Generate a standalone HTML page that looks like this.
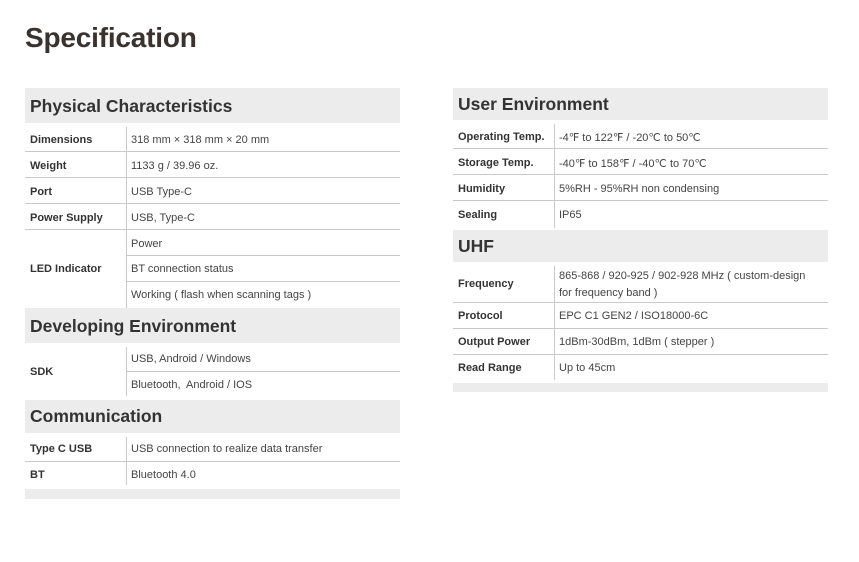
<!DOCTYPE html>
<html><head><style>
body{margin:0;width:859px;height:562px;background:#fff;position:relative;font-family:"Liberation Sans",sans-serif;color:#333;overflow:hidden}
div{position:absolute}
.title{left:25px;top:22px;font-size:28px;font-weight:bold;color:#3b322e;letter-spacing:-0.2px}
.hd{background:#ececec;font-size:17.5px;font-weight:bold;color:#333;padding-left:5px;box-sizing:border-box}
.ln{height:1px;background:#c9c9c9}
.vl{width:1px;background:#c9c9c9}
.l{font-size:11px;font-weight:bold;color:#333;margin-top:2px}
.v{font-size:11px;color:#444;margin-top:2px}
</style></head><body>
<div class="title">Specification</div>

<!-- LEFT -->
<div class="hd" style="left:25px;top:88px;width:375px;height:35px;line-height:37px">Physical Characteristics</div>
<div class="vl" style="left:126px;top:127px;height:181px"></div>
<div class="ln" style="left:25px;top:151px;width:375px"></div>
<div class="ln" style="left:25px;top:177px;width:375px"></div>
<div class="ln" style="left:25px;top:203px;width:375px"></div>
<div class="ln" style="left:25px;top:229px;width:375px"></div>
<div class="ln" style="left:126px;top:255px;width:274px"></div>
<div class="ln" style="left:126px;top:281px;width:274px"></div>
<div class="l" style="left:30px;top:132px">Dimensions</div><div class="v" style="left:131px;top:132px">318 mm × 318 mm × 20 mm</div>
<div class="l" style="left:30px;top:158px">Weight</div><div class="v" style="left:131px;top:158px">1133 g / 39.96 oz.</div>
<div class="l" style="left:30px;top:184px">Port</div><div class="v" style="left:131px;top:184px">USB Type-C</div>
<div class="l" style="left:30px;top:210px">Power Supply</div><div class="v" style="left:131px;top:210px">USB, Type-C</div>
<div class="v" style="left:131px;top:236px">Power</div>
<div class="l" style="left:30px;top:261px">LED Indicator</div><div class="v" style="left:131px;top:261px">BT connection status</div>
<div class="v" style="left:131px;top:287px">Working ( flash when scanning tags )</div>

<div class="hd" style="left:25px;top:308px;width:375px;height:35px;line-height:37px">Developing Environment</div>
<div class="vl" style="left:126px;top:347px;height:49px"></div>
<div class="ln" style="left:126px;top:371px;width:274px"></div>
<div class="v" style="left:131px;top:351px">USB, Android / Windows</div>
<div class="l" style="left:30px;top:364px">SDK</div>
<div class="v" style="left:131px;top:377px">Bluetooth,&nbsp; Android / IOS</div>

<div class="hd" style="left:25px;top:400px;width:375px;height:33px;line-height:33px">Communication</div>
<div class="vl" style="left:126px;top:437px;height:48px"></div>
<div class="ln" style="left:25px;top:461px;width:375px"></div>
<div class="l" style="left:30px;top:441px">Type C USB</div><div class="v" style="left:131px;top:441px">USB connection to realize data transfer</div>
<div class="l" style="left:30px;top:467px">BT</div><div class="v" style="left:131px;top:467px">Bluetooth 4.0</div>
<div class="hd" style="left:25px;top:489px;width:375px;height:10px"></div>

<!-- RIGHT -->
<div class="hd" style="left:453px;top:88px;width:375px;height:32px;line-height:32px">User Environment</div>
<div class="vl" style="left:554px;top:124px;height:104px"></div>
<div class="ln" style="left:453px;top:148px;width:375px"></div>
<div class="ln" style="left:453px;top:174px;width:375px"></div>
<div class="ln" style="left:453px;top:200px;width:375px"></div>
<div class="l" style="left:458px;top:129px">Operating Temp.</div><div class="v" style="left:559px;top:129px">-4℉ to 122℉ / -20℃ to 50℃</div>
<div class="l" style="left:458px;top:155px">Storage Temp.</div><div class="v" style="left:559px;top:155px">-40℉ to 158℉ / -40℃ to 70℃</div>
<div class="l" style="left:458px;top:181px">Humidity</div><div class="v" style="left:559px;top:181px">5%RH - 95%RH non condensing</div>
<div class="l" style="left:458px;top:207px">Sealing</div><div class="v" style="left:559px;top:207px">IP65</div>

<div class="hd" style="left:453px;top:230px;width:375px;height:32px;line-height:32px">UHF</div>
<div class="vl" style="left:554px;top:266px;height:114px"></div>
<div class="ln" style="left:453px;top:302px;width:375px"></div>
<div class="ln" style="left:453px;top:328px;width:375px"></div>
<div class="ln" style="left:453px;top:354px;width:375px"></div>
<div class="v" style="left:559px;top:268px">865-868 / 920-925 / 902-928 MHz ( custom-design</div>
<div class="l" style="left:458px;top:276px">Frequency</div>
<div class="v" style="left:559px;top:285px">for frequency band )</div>
<div class="l" style="left:458px;top:308px">Protocol</div><div class="v" style="left:559px;top:308px">EPC C1 GEN2 / ISO18000-6C</div>
<div class="l" style="left:458px;top:334px">Output Power</div><div class="v" style="left:559px;top:334px">1dBm-30dBm, 1dBm ( stepper )</div>
<div class="l" style="left:458px;top:360px">Read Range</div><div class="v" style="left:559px;top:360px">Up to 45cm</div>
<div class="hd" style="left:453px;top:383px;width:375px;height:9px"></div>
</body></html>
